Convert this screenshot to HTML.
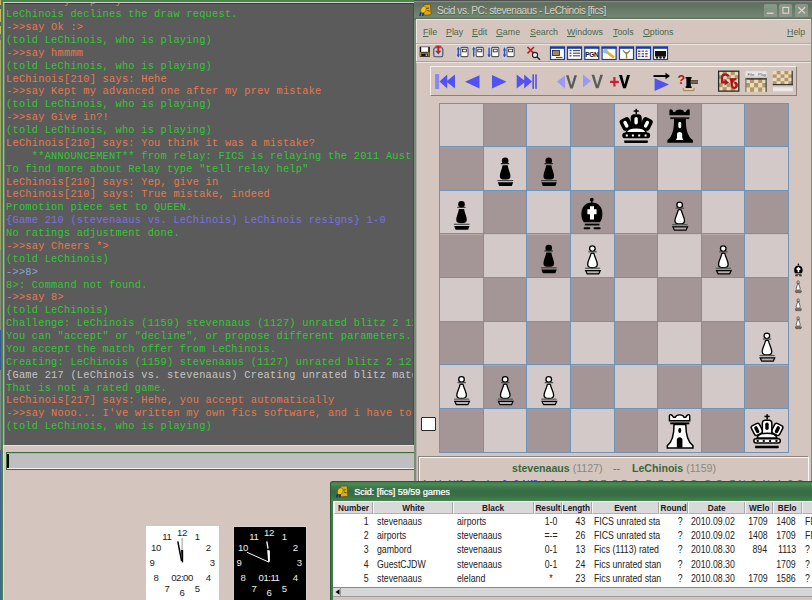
<!DOCTYPE html>
<html><head><meta charset="utf-8"><style>
*{margin:0;padding:0;box-sizing:border-box}
html,body{width:812px;height:600px;overflow:hidden}
body{position:relative;background:#d4c6bf;font-family:"Liberation Sans",sans-serif}
.a{position:absolute}
svg{position:absolute;overflow:visible}
#chat pre{position:absolute;left:2px;top:-7.7px;font-family:"Liberation Mono",monospace;font-size:10.3px;letter-spacing:0.26px;line-height:12.87px;color:#33c633;white-space:pre}
.o{color:#e47a4c}.p{color:#7c70e4}.c{color:#86a6d6}.w{color:#c4c4c4}
.menu{position:absolute;top:25.9px;font-size:9.6px;color:#4a684a;white-space:nowrap;transform:scaleX(.92);transform-origin:0 0}
.menu u{text-decoration:underline;text-decoration-thickness:1px;text-underline-offset:1.2px}
.gl{position:absolute;font-size:10.2px;color:#222;white-space:nowrap;line-height:14px}
.gh{position:absolute;top:502px;height:12px;background:#d9d9d9;border-right:1px solid #a8a8a8;border-bottom:1px solid #b0b0b0;font-size:9.8px;font-weight:bold;color:#1a1a2a;text-align:center;line-height:11px;white-space:nowrap;overflow:hidden}
.gh span{display:inline-block;transform:scaleX(.84);margin:0 -10px}
.r{text-align:right}
</style></head><body>
<div class="a" style="left:0;top:0;width:1px;height:600px;background:linear-gradient(#c8b860 0,#c8b860 5px,#5a6a5a 5px,#5a6a5a 9px,#c8b860 9px,#c8b860 22px,#5a6a5a 22px,#5a6a5a 26px,#c8b860 26px,#c8b860 34px,#6a7a6a 34px,#6a7a6a 40px,#a8a868 40px,#a0a468 250px,#8a8a78 250px,#8a8a78 330px,#3a5a9a 330px,#3a5a9a 370px,#7a8a8a 370px,#7a8a8a 450px,#4a5a9a 450px,#3a6a8a 600px)"></div>
<div class="a" style="left:1px;top:0;width:413px;height:600px;background:#4a864a"></div>
<div class="a" style="left:1px;top:0;width:1px;height:600px;background:#5a7060"></div>
<div class="a" style="left:3px;top:2px;width:411px;height:598px;background:#d4c6bf"></div>
<div class="a" id="chat" style="left:3px;top:2px;width:411px;height:443px;background:#5b5b5b;border-top:1px solid #d0d0d0;border-left:1px solid #a4b8a4;overflow:hidden"><div class="a" style="left:0;top:0;width:420px;height:1px;background:#3c3c3c"></div><div class="a" style="left:0;top:0;width:1px;height:450px;background:#787878"></div><pre><span class="o">         y   p   y</span>
LeChinois declines the draw request.
<span class="o">->>say Ok :></span>
(told LeChinois, who is playing)
<span class="o">->>say hmmmm</span>
(told LeChinois, who is playing)
<span class="o">LeChinois[210] says: Hehe</span>
<span class="o">->>say Kept my advanced one after my prev mistake</span>
(told LeChinois, who is playing)
<span class="o">->>say Give in?!</span>
(told LeChinois, who is playing)
<span class="o">LeChinois[210] says: You think it was a mistake?</span>
    **ANNOUNCEMENT** from relay: FICS is relaying the 2011 Australian
To find more about Relay type "tell relay help"
<span class="o">LeChinois[210] says: Yep, give in</span>
<span class="o">LeChinois[210] says: True mistake, indeed</span>
Promotion piece set to QUEEN.
<span class="p">{Game 210 (stevenaaus vs. LeChinois) LeChinois resigns} 1-0</span>
No ratings adjustment done.
<span class="o">->>say Cheers *></span>
(told LeChinois)
<span class="c">->>8></span>
8>: Command not found.
<span class="o">->>say 8></span>
(told LeChinois)
Challenge: LeChinois (1159) stevenaaus (1127) unrated blitz 2 12
You can "accept" or "decline", or propose different parameters.
You accept the match offer from LeChinois.
Creating: LeChinois (1159) stevenaaus (1127) unrated blitz 2 12
<span class="w">{Game 217 (LeChinois vs. stevenaaus) Creating unrated blitz match.}</span>
That is not a rated game.
<span class="o">LeChinois[217] says: Hehe, you accept automatically</span>
<span class="o">->>say Nooo... I've written my own fics software, and i have to</span>
(told LeChinois, who is playing)</pre></div>
<div class="a" style="left:6px;top:452px;width:408px;height:18px;background:#bfbfbf;box-shadow:inset 0 1px 0 #b2b2b8;border-top:1px solid #3c6a3c;border-bottom:1px solid #3c6a3c;border-left:1px solid #3c6a3c"></div>
<div class="a" style="left:7px;top:468px;width:407px;height:1px;background:#f2f2f2"></div>
<div class="a" style="left:7px;top:454px;width:1.8px;height:13.5px;background:#000"></div>
<div class="a" style="left:3px;top:445px;width:1px;height:155px;background:#e4dcd8"></div>
<div class="a" style="left:3px;top:445px;width:411px;height:1px;background:#e8e0dc"></div>
<div class="a" style="left:414px;top:0;width:398px;height:486px;background:#788c78"></div>
<div class="a" style="left:414px;top:0;width:398px;height:20px;background:linear-gradient(#4f514f 0px,#4f514f 1px,#7a907a 1px,#7a907a 2px,#687a68 2px,#5f6e60 3px,#667866 9px,#6c7f6c 13px,#738873 17px,#627362 18px,#627362 19px,#627362 20px)"></div>
<div class="a" style="left:413px;top:3px;width:1px;height:442px;background:#4b4b4b"></div>
<div class="a" style="left:437px;top:4.5px;font-size:10.2px;color:#d8d0c8;letter-spacing:-0.47px;white-space:nowrap;text-shadow:0.5px 0.5px 0 #55654f">Scid vs. PC: stevenaaus - LeChinois [fics]</div>
<svg style="left:0;top:0" width="812" height="600" viewBox="0 0 812 600"><g transform="translate(419.3,3.9)"><path d="M4.5,0.6 L11.2,0.4 L11.8,9.8 L11,11 L5.5,11.4 L4.2,9.5 Z" fill="#d8ac18" stroke="#6a4a18" stroke-width="0.8"/><path d="M1.4,6.6 C1.6,3.2 4.2,1.6 6,2.6 C7.6,3.6 7.4,6.6 5.4,8.6 C4,9.8 1.4,9.6 1.4,6.6 Z" fill="#f0c800" stroke="#7a5a10" stroke-width="0.7"/><path d="M7.2,4.6 L9.8,4 M8,6.6 L10.4,7.2" stroke="#553820" stroke-width="0.9"/><path d="M1.6,8.6 L0.6,12 M4.2,8.8 L3.4,12" stroke="#1a2a88" stroke-width="1.5"/></g></svg>
<div class="a" style="left:763.5px;top:3.8px;width:13.2px;height:13px;background:#8b958b;border-radius:1.5px;overflow:hidden"><div class="a" style="left:0;top:4.5px;width:14px;height:4px;background:#7f977f"></div></div>
<div class="a" style="left:779.2px;top:3.8px;width:13.2px;height:13px;background:#8b958b;border-radius:1.5px;overflow:hidden"><div class="a" style="left:0;top:4.5px;width:14px;height:4px;background:#7f977f"></div></div>
<div class="a" style="left:795px;top:3.8px;width:13.2px;height:13px;background:#8b958b;border-radius:1.5px;overflow:hidden"><div class="a" style="left:0;top:4.5px;width:14px;height:4px;background:#7f977f"></div></div>
<svg style="left:0;top:0" width="812" height="600" viewBox="0 0 812 600"><rect x="767" y="12.6" width="6.5" height="1.3" fill="#e4d2d0"/><rect x="782.9" y="7.4" width="5.8" height="5.8" fill="none" stroke="#e4d2d0" stroke-width="1.1"/><path d="M798.4,7.2 L805,13.4 M805,7.2 L798.4,13.4" stroke="#e4d2d0" stroke-width="1.3"/></svg>
<div class="a" style="left:416px;top:19px;width:395px;height:467px;background:#d4c6bf;border-left:1px solid #b4aca6"></div>
<div class="a" style="left:416px;top:19px;width:395px;height:1px;background:#ece6e2"></div>
<div class="a" style="left:416px;top:19px;width:1px;height:24px;background:#f0ebe8"></div>
<div class="a" style="left:416px;top:44px;width:1px;height:17px;background:#f0ebe8"></div>
<div class="menu" style="left:423px"><u>F</u>ile</div>
<div class="menu" style="left:446px"><u>P</u>lay</div>
<div class="menu" style="left:472px"><u>E</u>dit</div>
<div class="menu" style="left:496px"><u>G</u>ame</div>
<div class="menu" style="left:530px"><u>S</u>earch</div>
<div class="menu" style="left:567px"><u>W</u>indows</div>
<div class="menu" style="left:613px"><u>T</u>ools</div>
<div class="menu" style="left:643px"><u>O</u>ptions</div>
<div class="menu" style="left:787px"><u>H</u>elp</div>
<div class="a" style="left:416px;top:43px;width:395px;height:1px;background:#b8aca6"></div>
<div class="a" style="left:416px;top:44px;width:395px;height:1px;background:#ece4df"></div>
<div class="a" style="left:416px;top:61px;width:395px;height:1px;background:#aaa09a"></div>
<div class="a" style="left:416px;top:62px;width:395px;height:1px;background:#ece4df"></div>
<div class="a" style="left:430px;top:66px;width:367px;height:30px;border-top:1px solid #f4eee8;border-left:1px solid #f4eee8;border-bottom:1px solid #8a8078;border-right:1px solid #8a8078"></div>
<svg style="left:0;top:0" width="812" height="600" viewBox="0 0 812 600"><rect x="435.1" y="74.1" width="4.1" height="14.9" fill="#8a8aee"/><path d="M439.5,81.6 L447.2,74.4 L447.2,88.6 Z M446.2,81.6 L455,74.4 L455,88.6 Z" fill="#5252f2"/><path d="M465,81.8 L479.5,75.2 L479.5,88.4 Z" fill="#5252f2"/><path d="M492,75 L506.6,81.8 L492,88.6 Z" fill="#5252f2"/><path d="M516.7,74.6 L525.6,81.6 L516.7,88.6 Z M524.2,74.6 L532,81.6 L524.2,88.6 Z" fill="#5252f2"/><rect x="532.4" y="74.4" width="1.6" height="14.4" fill="#5252f2"/><rect x="535.2" y="74.4" width="1.6" height="14.4" fill="#5252f2"/><path d="M557,81.6 L565,75.4 L565,88.7 Z" fill="#9a9af2"/><path d="M583,74.6 L591,81 L583,87.6 Z" fill="#9a9af2"/><path d="M566,75.2 L568.6,75.2 L571.4,85.2 L574.4,75.2 L577,75.2 L572.8,88.4 L570.2,88.4 Z" fill="#5c5c5c"/><path d="M591.5,74.8 L594.2,74.8 L597.2,85 L600.3,74.8 L603,74.8 L598.6,88.2 L595.9,88.2 Z" fill="#5c5c5c"/><rect x="610" y="80.8" width="8.8" height="2.2" fill="#cc1e2e"/><rect x="613.3" y="77" width="2.2" height="9.5" fill="#cc1e2e"/><path d="M619,74.9 L622,74.9 L624.5,84.4 L627,74.9 L630,74.9 L625.9,88.2 L623.1,88.2 Z" fill="#000"/><rect x="653.5" y="75.1" width="13" height="1.9" fill="#000"/><path d="M665.5,72.8 L670,76 L665.5,79.2 Z" fill="#000"/><path d="M654.6,78.2 L669,84.6 L654.6,91.1 Z" fill="#5252f2"/><text x="677.5" y="84.2" font-family="Liberation Sans" font-weight="bold" font-size="12.5" fill="#b41414">?</text><rect x="686.4" y="77.5" width="4.4" height="10.2" fill="#000"/><rect x="685.6" y="77" width="6" height="1.6" fill="#000"/><rect x="685.6" y="86.4" width="6" height="1.6" fill="#000"/><rect x="690.8" y="80.4" width="7.2" height="1.2" fill="#000"/><rect x="690.8" y="81.6" width="7.2" height="1" fill="#b09050"/><rect x="690.8" y="82.6" width="7.2" height="1" fill="#000"/><path d="M683,88.2 L684,90.6 L693.5,90.6 L694.3,88.2" fill="none" stroke="#b09060" stroke-width="1.4"/><rect x="718.6" y="71.2" width="20.2" height="19.9" fill="#e8dcbc"/><rect x="722.64" y="71.20" width="4.04" height="3.98" fill="#b4966a"/><rect x="730.72" y="71.20" width="4.04" height="3.98" fill="#b4966a"/><rect x="718.60" y="75.18" width="4.04" height="3.98" fill="#b4966a"/><rect x="726.68" y="75.18" width="4.04" height="3.98" fill="#b4966a"/><rect x="734.76" y="75.18" width="4.04" height="3.98" fill="#b4966a"/><rect x="722.64" y="79.16" width="4.04" height="3.98" fill="#b4966a"/><rect x="730.72" y="79.16" width="4.04" height="3.98" fill="#b4966a"/><rect x="718.60" y="83.14" width="4.04" height="3.98" fill="#b4966a"/><rect x="726.68" y="83.14" width="4.04" height="3.98" fill="#b4966a"/><rect x="734.76" y="83.14" width="4.04" height="3.98" fill="#b4966a"/><rect x="722.64" y="87.12" width="4.04" height="3.98" fill="#b4966a"/><rect x="730.72" y="87.12" width="4.04" height="3.98" fill="#b4966a"/><rect x="718.6" y="71.2" width="20.2" height="19.9" fill="none" stroke="#2a2a2a" stroke-width="1.3"/><path d="M728.3,76.4 C727.4,73.8 722.2,73.6 722,77.4 L722,82.3 L725.6,82.3" fill="none" stroke="#b0141c" stroke-width="2.3"/><path d="M724.6,79 L729,82.4 L724.6,85.6 Z" fill="#b0141c"/><path d="M729.6,79.2 L736.4,79.2" stroke="#b0141c" stroke-width="2.2"/><path d="M731.4,80 L732,85.6 C732.4,88.6 736.4,88.8 736.6,85.2 C736.6,83.6 735.4,82.6 734.2,82.6" fill="none" stroke="#b0141c" stroke-width="2.2"/><path d="M730,79.4 L734.6,80.2 L731.6,84.4 Z" fill="#b0141c"/><rect x="745.5" y="71.2" width="21.2" height="5.2" fill="#e8e6e4"/><text x="747.5" y="75.8" font-family="Liberation Sans" font-size="4.2" fill="#555">File</text><text x="758" y="75.8" font-family="Liberation Sans" font-size="4.2" fill="#555">Play</text><rect x="745.8" y="78.6" width="20.6" height="13.2" fill="#e8dcbc"/><rect x="749.92" y="78.60" width="4.12" height="4.40" fill="#b4966a"/><rect x="758.16" y="78.60" width="4.12" height="4.40" fill="#b4966a"/><rect x="745.80" y="83.00" width="4.12" height="4.40" fill="#b4966a"/><rect x="754.04" y="83.00" width="4.12" height="4.40" fill="#b4966a"/><rect x="762.28" y="83.00" width="4.12" height="4.40" fill="#b4966a"/><rect x="749.92" y="87.40" width="4.12" height="4.40" fill="#b4966a"/><rect x="758.16" y="87.40" width="4.12" height="4.40" fill="#b4966a"/><rect x="745.5" y="78.2" width="21.2" height="1.4" fill="#2a2a2a"/><rect x="745.3" y="78.2" width="1.2" height="13.7" fill="#777"/><rect x="765.5" y="78.2" width="1.2" height="13.7" fill="#444"/><rect x="772.8" y="71" width="19.4" height="13.6" fill="#e8dcbc"/><rect x="776.68" y="71.00" width="3.88" height="3.40" fill="#b4966a"/><rect x="784.44" y="71.00" width="3.88" height="3.40" fill="#b4966a"/><rect x="772.80" y="74.40" width="3.88" height="3.40" fill="#b4966a"/><rect x="780.56" y="74.40" width="3.88" height="3.40" fill="#b4966a"/><rect x="788.32" y="74.40" width="3.88" height="3.40" fill="#b4966a"/><rect x="776.68" y="77.80" width="3.88" height="3.40" fill="#b4966a"/><rect x="784.44" y="77.80" width="3.88" height="3.40" fill="#b4966a"/><rect x="772.80" y="81.20" width="3.88" height="3.40" fill="#b4966a"/><rect x="780.56" y="81.20" width="3.88" height="3.40" fill="#b4966a"/><rect x="788.32" y="81.20" width="3.88" height="3.40" fill="#b4966a"/><rect x="772.7" y="84" width="20.1" height="1.2" fill="#333"/><rect x="791.6" y="70.8" width="1.2" height="14.4" fill="#333"/><rect x="773" y="87.3" width="19.8" height="4" fill="#ebe9e7"/><rect x="419.7" y="46.7" width="10.1" height="10.1" fill="#111"/><rect x="421.2" y="47.2" width="7" height="4.6" fill="#fff"/><rect x="420.2" y="52.2" width="1" height="4" fill="#d0b020"/><rect x="428.3" y="52.2" width="1" height="4" fill="#d0b020"/><rect x="421.2" y="52.6" width="7" height="0.9" fill="#d0b020"/><rect x="425.6" y="54.3" width="1.6" height="1.6" fill="#ccc"/><rect x="433.8" y="47.8" width="9" height="9" rx="1.5" fill="#b8d4e8" stroke="#4a4a4a" stroke-width="1.1"/><rect x="437.4" y="45.8" width="1.8" height="6" fill="#d01818"/><path d="M435.2,50.8 L441.4,50.8 L438.3,54.4 Z" fill="#d01818"/><rect x="435.3" y="45.6" width="6" height="1.2" fill="#d01818"/><rect x="456" y="46" width="12.8" height="12.4" fill="#d2d2d6"/><rect x="460.8" y="47.4" width="7.2" height="9.2" rx="1" fill="#fff" stroke="#555" stroke-width="1.1"/><rect x="462.4" y="49.2" width="4" height="2.6" fill="none" stroke="#333" stroke-width="0.9"/><rect x="457.6" y="47.6" width="1.4" height="9" fill="#2a50c0"/><path d="M456.6,49.6 L458.3,47 L460,49.6 Z" fill="#2a50c0"/><path d="M456.6,54.6 L458.3,57.2 L460,54.6 Z" fill="#2a50c0"/><rect x="471.4" y="46" width="12.8" height="12.4" fill="#d2d2d6"/><rect x="476.2" y="47.4" width="7.2" height="9.2" rx="1" fill="#fff" stroke="#555" stroke-width="1.1"/><rect x="477.79999999999995" y="49.2" width="4" height="2.6" fill="none" stroke="#333" stroke-width="0.9"/><rect x="473.0" y="47.6" width="1.4" height="9" fill="#2a50c0"/><path d="M472.0,49.6 L473.7,47 L475.4,49.6 Z" fill="#2a50c0"/><rect x="486.8" y="46" width="12.8" height="12.4" fill="#d2d2d6"/><rect x="491.6" y="47.4" width="7.2" height="9.2" rx="1" fill="#fff" stroke="#555" stroke-width="1.1"/><rect x="493.2" y="49.2" width="4" height="2.6" fill="none" stroke="#333" stroke-width="0.9"/><rect x="488.40000000000003" y="47.6" width="1.4" height="9" fill="#2a50c0"/><path d="M487.40000000000003,54.6 L489.1,57.2 L490.8,54.6 Z" fill="#2a50c0"/><rect x="502.2" y="46" width="12.8" height="12.4" fill="#d2d2d6"/><rect x="507.0" y="47.4" width="7.2" height="9.2" rx="1" fill="#fff" stroke="#555" stroke-width="1.1"/><rect x="508.59999999999997" y="49.2" width="4" height="2.6" fill="none" stroke="#333" stroke-width="0.9"/><rect x="503.8" y="47.6" width="1.4" height="9" fill="#2a50c0"/><path d="M502.8,54.6 L504.5,57.2 L506.2,54.6 Z" fill="#2a50c0"/><path d="M502.8,50.6 L504.5,48 L506.2,50.6 Z" fill="#2a50c0"/><path d="M527.5,47 L534,53.4 M534,47 L527.5,53.4" stroke="#c81818" stroke-width="1.6"/><circle cx="535" cy="55" r="2.6" fill="#e0e8f0" stroke="#222" stroke-width="1.1"/><path d="M537,57 L540,59.8" stroke="#222" stroke-width="1.5"/><rect x="550.5" y="47.1" width="14" height="12.4" fill="#fff" stroke="#1a3c9c" stroke-width="1.2"/><rect x="550" y="46.6" width="15" height="2.2" fill="#1a3c9c"/><rect x="567.5" y="47.1" width="14" height="12.4" fill="#fff" stroke="#1a3c9c" stroke-width="1.2"/><rect x="567" y="46.6" width="15" height="2.2" fill="#1a3c9c"/><rect x="584.8" y="47.1" width="14" height="12.4" fill="#fff" stroke="#1a3c9c" stroke-width="1.2"/><rect x="584.3" y="46.6" width="15" height="2.2" fill="#1a3c9c"/><rect x="602.1" y="47.1" width="14" height="12.4" fill="#fff" stroke="#1a3c9c" stroke-width="1.2"/><rect x="601.6" y="46.6" width="15" height="2.2" fill="#1a3c9c"/><rect x="619.5" y="47.1" width="14" height="12.4" fill="#fff" stroke="#1a3c9c" stroke-width="1.2"/><rect x="619" y="46.6" width="15" height="2.2" fill="#1a3c9c"/><rect x="636.5" y="47.1" width="14" height="12.4" fill="#fff" stroke="#1a3c9c" stroke-width="1.2"/><rect x="636" y="46.6" width="15" height="2.2" fill="#1a3c9c"/><rect x="653.5" y="47.1" width="14" height="12.4" fill="#fff" stroke="#1a3c9c" stroke-width="1.2"/><rect x="653" y="46.6" width="15" height="2.2" fill="#1a3c9c"/><rect x="552.5" y="50.5" width="7" height="5" fill="#9a8a5a" stroke="#222" stroke-width="0.8"/><path d="M556,57.5 L562.5,57.5" stroke="#c81818" stroke-width="1.2"/><rect x="569.5" y="50.0" width="2" height="1.2" fill="#1a3c9c"/><rect x="573" y="50.0" width="7" height="1.2" fill="#555"/><rect x="569.5" y="52.6" width="2" height="1.2" fill="#1a3c9c"/><rect x="573" y="52.6" width="7" height="1.2" fill="#555"/><rect x="569.5" y="55.2" width="2" height="1.2" fill="#1a3c9c"/><rect x="573" y="55.2" width="7" height="1.2" fill="#555"/><text x="585.2" y="57.3" font-family="Liberation Sans" font-weight="bold" font-size="6.6" letter-spacing="-0.4" fill="#111">PGN</text><path d="M604,50 L614,57.5" stroke="#e0b020" stroke-width="2.6"/><circle cx="605.5" cy="51.2" r="2.4" fill="#a0b8d0"/><path d="M626.5,58.5 L626.5,52 M626.5,54 L623,50.5 M626.5,54 L630,50.5" stroke="#a08050" stroke-width="1.4"/><rect x="638.0" y="50.5" width="2.4" height="1.4" fill="#1a3c9c"/><rect x="641.6" y="50.5" width="2.4" height="1.4" fill="#c84040"/><rect x="645.2" y="50.5" width="2.4" height="1.4" fill="#666"/><rect x="638.0" y="53.1" width="2.4" height="1.4" fill="#c84040"/><rect x="641.6" y="53.1" width="2.4" height="1.4" fill="#666"/><rect x="645.2" y="53.1" width="2.4" height="1.4" fill="#1a3c9c"/><rect x="638.0" y="55.7" width="2.4" height="1.4" fill="#666"/><rect x="641.6" y="55.7" width="2.4" height="1.4" fill="#1a3c9c"/><rect x="645.2" y="55.7" width="2.4" height="1.4" fill="#c84040"/><rect x="655" y="51" width="11" height="5.6" fill="#111"/><circle cx="657" cy="57.5" r="1.2" fill="#111"/><circle cx="660.5" cy="57.5" r="1.2" fill="#111"/><circle cx="664" cy="57.5" r="1.2" fill="#111"/></svg>
<svg style="left:0;top:0" width="812" height="600" viewBox="0 0 812 600"><rect x="439.500" y="103.500" width="43.675" height="43.675" fill="#d3c9c8"/><rect x="483.125" y="103.500" width="43.675" height="43.675" fill="#a49696"/><rect x="526.750" y="103.500" width="43.675" height="43.675" fill="#d3c9c8"/><rect x="570.375" y="103.500" width="43.675" height="43.675" fill="#a49696"/><rect x="614.000" y="103.500" width="43.675" height="43.675" fill="#d3c9c8"/><rect x="657.625" y="103.500" width="43.675" height="43.675" fill="#a49696"/><rect x="701.250" y="103.500" width="43.675" height="43.675" fill="#d3c9c8"/><rect x="744.875" y="103.500" width="43.675" height="43.675" fill="#a49696"/><rect x="439.500" y="147.125" width="43.675" height="43.675" fill="#a49696"/><rect x="483.125" y="147.125" width="43.675" height="43.675" fill="#d3c9c8"/><rect x="526.750" y="147.125" width="43.675" height="43.675" fill="#a49696"/><rect x="570.375" y="147.125" width="43.675" height="43.675" fill="#d3c9c8"/><rect x="614.000" y="147.125" width="43.675" height="43.675" fill="#a49696"/><rect x="657.625" y="147.125" width="43.675" height="43.675" fill="#d3c9c8"/><rect x="701.250" y="147.125" width="43.675" height="43.675" fill="#a49696"/><rect x="744.875" y="147.125" width="43.675" height="43.675" fill="#d3c9c8"/><rect x="439.500" y="190.750" width="43.675" height="43.675" fill="#d3c9c8"/><rect x="483.125" y="190.750" width="43.675" height="43.675" fill="#a49696"/><rect x="526.750" y="190.750" width="43.675" height="43.675" fill="#d3c9c8"/><rect x="570.375" y="190.750" width="43.675" height="43.675" fill="#a49696"/><rect x="614.000" y="190.750" width="43.675" height="43.675" fill="#d3c9c8"/><rect x="657.625" y="190.750" width="43.675" height="43.675" fill="#a49696"/><rect x="701.250" y="190.750" width="43.675" height="43.675" fill="#d3c9c8"/><rect x="744.875" y="190.750" width="43.675" height="43.675" fill="#a49696"/><rect x="439.500" y="234.375" width="43.675" height="43.675" fill="#a49696"/><rect x="483.125" y="234.375" width="43.675" height="43.675" fill="#d3c9c8"/><rect x="526.750" y="234.375" width="43.675" height="43.675" fill="#a49696"/><rect x="570.375" y="234.375" width="43.675" height="43.675" fill="#d3c9c8"/><rect x="614.000" y="234.375" width="43.675" height="43.675" fill="#a49696"/><rect x="657.625" y="234.375" width="43.675" height="43.675" fill="#d3c9c8"/><rect x="701.250" y="234.375" width="43.675" height="43.675" fill="#a49696"/><rect x="744.875" y="234.375" width="43.675" height="43.675" fill="#d3c9c8"/><rect x="439.500" y="278.000" width="43.675" height="43.675" fill="#d3c9c8"/><rect x="483.125" y="278.000" width="43.675" height="43.675" fill="#a49696"/><rect x="526.750" y="278.000" width="43.675" height="43.675" fill="#d3c9c8"/><rect x="570.375" y="278.000" width="43.675" height="43.675" fill="#a49696"/><rect x="614.000" y="278.000" width="43.675" height="43.675" fill="#d3c9c8"/><rect x="657.625" y="278.000" width="43.675" height="43.675" fill="#a49696"/><rect x="701.250" y="278.000" width="43.675" height="43.675" fill="#d3c9c8"/><rect x="744.875" y="278.000" width="43.675" height="43.675" fill="#a49696"/><rect x="439.500" y="321.625" width="43.675" height="43.675" fill="#a49696"/><rect x="483.125" y="321.625" width="43.675" height="43.675" fill="#d3c9c8"/><rect x="526.750" y="321.625" width="43.675" height="43.675" fill="#a49696"/><rect x="570.375" y="321.625" width="43.675" height="43.675" fill="#d3c9c8"/><rect x="614.000" y="321.625" width="43.675" height="43.675" fill="#a49696"/><rect x="657.625" y="321.625" width="43.675" height="43.675" fill="#d3c9c8"/><rect x="701.250" y="321.625" width="43.675" height="43.675" fill="#a49696"/><rect x="744.875" y="321.625" width="43.675" height="43.675" fill="#d3c9c8"/><rect x="439.500" y="365.250" width="43.675" height="43.675" fill="#d3c9c8"/><rect x="483.125" y="365.250" width="43.675" height="43.675" fill="#a49696"/><rect x="526.750" y="365.250" width="43.675" height="43.675" fill="#d3c9c8"/><rect x="570.375" y="365.250" width="43.675" height="43.675" fill="#a49696"/><rect x="614.000" y="365.250" width="43.675" height="43.675" fill="#d3c9c8"/><rect x="657.625" y="365.250" width="43.675" height="43.675" fill="#a49696"/><rect x="701.250" y="365.250" width="43.675" height="43.675" fill="#d3c9c8"/><rect x="744.875" y="365.250" width="43.675" height="43.675" fill="#a49696"/><rect x="439.500" y="408.875" width="43.675" height="43.675" fill="#a49696"/><rect x="483.125" y="408.875" width="43.675" height="43.675" fill="#d3c9c8"/><rect x="526.750" y="408.875" width="43.675" height="43.675" fill="#a49696"/><rect x="570.375" y="408.875" width="43.675" height="43.675" fill="#d3c9c8"/><rect x="614.000" y="408.875" width="43.675" height="43.675" fill="#a49696"/><rect x="657.625" y="408.875" width="43.675" height="43.675" fill="#d3c9c8"/><rect x="701.250" y="408.875" width="43.675" height="43.675" fill="#a49696"/><rect x="744.875" y="408.875" width="43.675" height="43.675" fill="#d3c9c8"/><rect x="439" y="103" width="1" height="350" fill="#6d94bb" shape-rendering="crispEdges"/><rect x="439" y="103" width="350" height="1" fill="#6d94bb" shape-rendering="crispEdges"/><rect x="483" y="103" width="1" height="350" fill="#6d94bb" shape-rendering="crispEdges"/><rect x="439" y="146" width="350" height="1" fill="#6d94bb" shape-rendering="crispEdges"/><rect x="526" y="103" width="1" height="350" fill="#6d94bb" shape-rendering="crispEdges"/><rect x="439" y="190" width="350" height="1" fill="#6d94bb" shape-rendering="crispEdges"/><rect x="570" y="103" width="1" height="350" fill="#6d94bb" shape-rendering="crispEdges"/><rect x="439" y="233" width="350" height="1" fill="#6d94bb" shape-rendering="crispEdges"/><rect x="614" y="103" width="1" height="350" fill="#6d94bb" shape-rendering="crispEdges"/><rect x="439" y="277" width="350" height="1" fill="#6d94bb" shape-rendering="crispEdges"/><rect x="657" y="103" width="1" height="350" fill="#6d94bb" shape-rendering="crispEdges"/><rect x="439" y="321" width="350" height="1" fill="#6d94bb" shape-rendering="crispEdges"/><rect x="701" y="103" width="1" height="350" fill="#6d94bb" shape-rendering="crispEdges"/><rect x="439" y="364" width="350" height="1" fill="#6d94bb" shape-rendering="crispEdges"/><rect x="744" y="103" width="1" height="350" fill="#6d94bb" shape-rendering="crispEdges"/><rect x="439" y="408" width="350" height="1" fill="#6d94bb" shape-rendering="crispEdges"/><rect x="788" y="103" width="1" height="350" fill="#6d94bb" shape-rendering="crispEdges"/><rect x="439" y="452" width="350" height="1" fill="#6d94bb" shape-rendering="crispEdges"/><g transform="translate(614.000,103.500)"><g><rect x="21.5" y="5.3" width="1.5" height="5.4" fill="#000"/><rect x="19.6" y="6.8" width="5.2" height="1.5" fill="#000"/><rect x="7.6" y="15.1" width="9" height="10.8" rx="2.3" transform="rotate(-27 12.1 20.5)" fill="#000" stroke="#000" stroke-width="1.5"/><rect x="27.8" y="15.1" width="9" height="10.8" rx="2.3" transform="rotate(27 32.3 20.5)" fill="#000" stroke="#000" stroke-width="1.5"/><rect x="17.45" y="11.45" width="9.5" height="15" rx="2.8" fill="#000" stroke="#000" stroke-width="1.5"/><rect x="20.4" y="13.6" width="3.4" height="7.4" rx="1.7" fill="#fff"/><rect x="10.2" y="17.1" width="3.4" height="7.4" rx="1.7" transform="rotate(-27 11.9 20.8)" fill="#fff"/><rect x="30.8" y="17.1" width="3.4" height="7.4" rx="1.7" transform="rotate(27 32.5 20.8)" fill="#fff"/><path d="M12.2,29.2 C13.5,22.6 30.9,22.6 32.2,29.2 Z" fill="#fff" stroke="#000" stroke-width="1.5"/><rect x="9" y="29.8" width="26.4" height="4.2" rx="2.1" fill="#000" stroke="#000" stroke-width="1.5"/><rect x="11.8" y="31" width="2" height="2" fill="#fff"/><rect x="17.9" y="31" width="2" height="2" fill="#fff"/><rect x="24.2" y="31" width="2" height="2" fill="#fff"/><rect x="30.6" y="31" width="2" height="2" fill="#fff"/><rect x="10.1" y="36.5" width="23.8" height="1" fill="#777"/><rect x="10.1" y="37.2" width="23.8" height="2.2" rx="0.8" fill="#000"/></g></g><g transform="translate(657.625,103.500)"><g><path d="M11.8,11.8 L11.8,7 C11.8,5.2 14.6,5.2 15.8,8.4 L17.6,8.4 C18.6,5.2 25.6,5.2 26.4,8.4 L28.2,8.4 C29.4,5.2 32.1,5.2 32.1,7 L32.1,11.8 Z" fill="#000"/><rect x="12.6" y="13.7" width="19.1" height="1.9" fill="#1a1a1a"/><path d="M16.4,15.6 L28.2,15.6 C28.2,25 29.4,32.5 35.3,36.8 L35.3,39.2 L9.7,39.2 L9.7,36.8 C15.4,32.5 16.4,25 16.4,15.6 Z" fill="#000"/><rect x="20.7" y="18.5" width="2.9" height="6.2" rx="1.4" fill="#fff"/><path d="M18.3,36.5 C19.6,35 19.4,33 19.4,31 C19.4,27.8 24.6,27.8 24.6,31 C24.6,33 24.4,35 25.7,36.5 Z" fill="#fff"/></g></g><g transform="translate(483.125,147.125)"><g><circle cx="22" cy="13.6" r="3.3" fill="#000"/><rect x="17.6" y="15.9" width="8.6" height="1.2" rx="0.6" fill="#222"/><path d="M19.4,18.2 L24.6,18.2 C25,22 27.3,25.5 27.3,29 C27.3,31.6 25.5,32.4 22,32.4 C18.5,32.4 16.7,31.6 16.7,29 C16.7,25.5 19,22 19.4,18.2 Z" fill="#000"/><rect x="14.3" y="33" width="15.7" height="1" fill="#333"/><path d="M14.7,35.2 L30,35.2 L28.8,38.4 Q28.6,38.9 28,38.9 L16.7,38.9 Q16.1,38.9 15.9,38.4 Z" fill="#000"/></g></g><g transform="translate(526.750,147.125)"><g><circle cx="22" cy="13.6" r="3.3" fill="#000"/><rect x="17.6" y="15.9" width="8.6" height="1.2" rx="0.6" fill="#222"/><path d="M19.4,18.2 L24.6,18.2 C25,22 27.3,25.5 27.3,29 C27.3,31.6 25.5,32.4 22,32.4 C18.5,32.4 16.7,31.6 16.7,29 C16.7,25.5 19,22 19.4,18.2 Z" fill="#000"/><rect x="14.3" y="33" width="15.7" height="1" fill="#333"/><path d="M14.7,35.2 L30,35.2 L28.8,38.4 Q28.6,38.9 28,38.9 L16.7,38.9 Q16.1,38.9 15.9,38.4 Z" fill="#000"/></g></g><g transform="translate(439.500,190.750)"><g><circle cx="22" cy="13.6" r="3.3" fill="#000"/><rect x="17.6" y="15.9" width="8.6" height="1.2" rx="0.6" fill="#222"/><path d="M19.4,18.2 L24.6,18.2 C25,22 27.3,25.5 27.3,29 C27.3,31.6 25.5,32.4 22,32.4 C18.5,32.4 16.7,31.6 16.7,29 C16.7,25.5 19,22 19.4,18.2 Z" fill="#000"/><rect x="14.3" y="33" width="15.7" height="1" fill="#333"/><path d="M14.7,35.2 L30,35.2 L28.8,38.4 Q28.6,38.9 28,38.9 L16.7,38.9 Q16.1,38.9 15.9,38.4 Z" fill="#000"/></g></g><g transform="translate(570.375,190.750)"><g><circle cx="21.4" cy="8.9" r="1.9" fill="#000"/><rect x="20.8" y="9" width="1.3" height="3.5" fill="#000"/><path d="M13.4,31.6 C11,28.5 10.6,24 11.2,20.5 C12.2,15 16.2,11.8 21.5,11.8 C26.8,11.8 30.8,15 31.8,20.5 C32.4,24 32,28.5 29.6,31.6 Z" fill="#000"/><path d="M19.6,15.6 L23.6,15.6 L23.6,18.4 L26.2,18.4 L26.2,23.4 L23.6,23.4 L23.6,28.8 L19.6,28.8 L19.6,23.4 L17,23.4 L17,18.4 L19.6,18.4 Z" fill="#fff"/><rect x="14.4" y="32.9" width="14.7" height="1.8" fill="#000"/><rect x="13.3" y="36.5" width="6.6" height="2.1" rx="0.8" fill="#000"/><rect x="23.2" y="36.5" width="7" height="2.1" rx="0.8" fill="#000"/></g></g><g transform="translate(657.625,190.750)"><g><circle cx="22" cy="14.2" r="2.8" fill="#fff" stroke="#000" stroke-width="1.3"/><rect x="18" y="16.9" width="8.4" height="1.1" fill="#444"/><path d="M20.5,19.4 C20.8,18.6 23.4,18.6 23.7,19.4 C24.2,23 26.9,26.4 26.9,30 C26.9,32.6 25,33.2 22.1,33.2 C19.2,33.2 17.3,32.6 17.3,30 C17.3,26.4 20,23 20.5,19.4 Z" fill="#fff" stroke="#000" stroke-width="1.3"/><rect x="14.6" y="33.3" width="15.2" height="1.2" fill="#555"/><path d="M15.3,36.2 L29.9,36.2 L28.4,39.4 L16.8,39.4 Z" fill="#b8b0ae" stroke="#000" stroke-width="1.2"/></g></g><g transform="translate(526.750,234.375)"><g><circle cx="22" cy="13.6" r="3.3" fill="#000"/><rect x="17.6" y="15.9" width="8.6" height="1.2" rx="0.6" fill="#222"/><path d="M19.4,18.2 L24.6,18.2 C25,22 27.3,25.5 27.3,29 C27.3,31.6 25.5,32.4 22,32.4 C18.5,32.4 16.7,31.6 16.7,29 C16.7,25.5 19,22 19.4,18.2 Z" fill="#000"/><rect x="14.3" y="33" width="15.7" height="1" fill="#333"/><path d="M14.7,35.2 L30,35.2 L28.8,38.4 Q28.6,38.9 28,38.9 L16.7,38.9 Q16.1,38.9 15.9,38.4 Z" fill="#000"/></g></g><g transform="translate(570.375,234.375)"><g><circle cx="22" cy="14.2" r="2.8" fill="#fff" stroke="#000" stroke-width="1.3"/><rect x="18" y="16.9" width="8.4" height="1.1" fill="#444"/><path d="M20.5,19.4 C20.8,18.6 23.4,18.6 23.7,19.4 C24.2,23 26.9,26.4 26.9,30 C26.9,32.6 25,33.2 22.1,33.2 C19.2,33.2 17.3,32.6 17.3,30 C17.3,26.4 20,23 20.5,19.4 Z" fill="#fff" stroke="#000" stroke-width="1.3"/><rect x="14.6" y="33.3" width="15.2" height="1.2" fill="#555"/><path d="M15.3,36.2 L29.9,36.2 L28.4,39.4 L16.8,39.4 Z" fill="#b8b0ae" stroke="#000" stroke-width="1.2"/></g></g><g transform="translate(701.250,234.375)"><g><circle cx="22" cy="14.2" r="2.8" fill="#fff" stroke="#000" stroke-width="1.3"/><rect x="18" y="16.9" width="8.4" height="1.1" fill="#444"/><path d="M20.5,19.4 C20.8,18.6 23.4,18.6 23.7,19.4 C24.2,23 26.9,26.4 26.9,30 C26.9,32.6 25,33.2 22.1,33.2 C19.2,33.2 17.3,32.6 17.3,30 C17.3,26.4 20,23 20.5,19.4 Z" fill="#fff" stroke="#000" stroke-width="1.3"/><rect x="14.6" y="33.3" width="15.2" height="1.2" fill="#555"/><path d="M15.3,36.2 L29.9,36.2 L28.4,39.4 L16.8,39.4 Z" fill="#b8b0ae" stroke="#000" stroke-width="1.2"/></g></g><g transform="translate(744.875,321.625)"><g><circle cx="22" cy="14.2" r="2.8" fill="#fff" stroke="#000" stroke-width="1.3"/><rect x="18" y="16.9" width="8.4" height="1.1" fill="#444"/><path d="M20.5,19.4 C20.8,18.6 23.4,18.6 23.7,19.4 C24.2,23 26.9,26.4 26.9,30 C26.9,32.6 25,33.2 22.1,33.2 C19.2,33.2 17.3,32.6 17.3,30 C17.3,26.4 20,23 20.5,19.4 Z" fill="#fff" stroke="#000" stroke-width="1.3"/><rect x="14.6" y="33.3" width="15.2" height="1.2" fill="#555"/><path d="M15.3,36.2 L29.9,36.2 L28.4,39.4 L16.8,39.4 Z" fill="#b8b0ae" stroke="#000" stroke-width="1.2"/></g></g><g transform="translate(439.500,365.250)"><g><circle cx="22" cy="14.2" r="2.8" fill="#fff" stroke="#000" stroke-width="1.3"/><rect x="18" y="16.9" width="8.4" height="1.1" fill="#444"/><path d="M20.5,19.4 C20.8,18.6 23.4,18.6 23.7,19.4 C24.2,23 26.9,26.4 26.9,30 C26.9,32.6 25,33.2 22.1,33.2 C19.2,33.2 17.3,32.6 17.3,30 C17.3,26.4 20,23 20.5,19.4 Z" fill="#fff" stroke="#000" stroke-width="1.3"/><rect x="14.6" y="33.3" width="15.2" height="1.2" fill="#555"/><path d="M15.3,36.2 L29.9,36.2 L28.4,39.4 L16.8,39.4 Z" fill="#b8b0ae" stroke="#000" stroke-width="1.2"/></g></g><g transform="translate(483.125,365.250)"><g><circle cx="22" cy="14.2" r="2.8" fill="#fff" stroke="#000" stroke-width="1.3"/><rect x="18" y="16.9" width="8.4" height="1.1" fill="#444"/><path d="M20.5,19.4 C20.8,18.6 23.4,18.6 23.7,19.4 C24.2,23 26.9,26.4 26.9,30 C26.9,32.6 25,33.2 22.1,33.2 C19.2,33.2 17.3,32.6 17.3,30 C17.3,26.4 20,23 20.5,19.4 Z" fill="#fff" stroke="#000" stroke-width="1.3"/><rect x="14.6" y="33.3" width="15.2" height="1.2" fill="#555"/><path d="M15.3,36.2 L29.9,36.2 L28.4,39.4 L16.8,39.4 Z" fill="#b8b0ae" stroke="#000" stroke-width="1.2"/></g></g><g transform="translate(526.750,365.250)"><g><circle cx="22" cy="14.2" r="2.8" fill="#fff" stroke="#000" stroke-width="1.3"/><rect x="18" y="16.9" width="8.4" height="1.1" fill="#444"/><path d="M20.5,19.4 C20.8,18.6 23.4,18.6 23.7,19.4 C24.2,23 26.9,26.4 26.9,30 C26.9,32.6 25,33.2 22.1,33.2 C19.2,33.2 17.3,32.6 17.3,30 C17.3,26.4 20,23 20.5,19.4 Z" fill="#fff" stroke="#000" stroke-width="1.3"/><rect x="14.6" y="33.3" width="15.2" height="1.2" fill="#555"/><path d="M15.3,36.2 L29.9,36.2 L28.4,39.4 L16.8,39.4 Z" fill="#b8b0ae" stroke="#000" stroke-width="1.2"/></g></g><g transform="translate(657.625,408.875)"><g><path d="M11.8,11.8 L11.8,7 C11.8,5.2 14.6,5.2 15.8,8.4 L17.6,8.4 C18.6,5.2 25.6,5.2 26.4,8.4 L28.2,8.4 C29.4,5.2 32.1,5.2 32.1,7 L32.1,11.8 Z" fill="#fff" stroke="#000" stroke-width="1.4"/><rect x="12.6" y="13.5" width="19.1" height="1.9" fill="#000"/><path d="M16.4,15.6 L28.2,15.6 C28.2,25 29.4,32.5 35.3,36.8 L35.3,39.2 L9.7,39.2 L9.7,36.8 C15.4,32.5 16.4,25 16.4,15.6 Z" fill="#fff" stroke="#000" stroke-width="1.5"/><ellipse cx="22.1" cy="21.5" rx="1.5" ry="2.6" fill="#000"/><path d="M19.2,38.8 L19.2,31 C19.2,27.4 24.8,27.4 24.8,31 L24.8,38.8 Z" fill="#000"/></g></g><g transform="translate(744.875,408.875)"><g><rect x="21.5" y="5.3" width="1.5" height="5.4" fill="#000"/><rect x="19.6" y="6.8" width="5.2" height="1.5" fill="#000"/><rect x="7.6" y="15.1" width="9" height="10.8" rx="2.3" transform="rotate(-27 12.1 20.5)" fill="#fff" stroke="#000" stroke-width="1.5"/><rect x="27.8" y="15.1" width="9" height="10.8" rx="2.3" transform="rotate(27 32.3 20.5)" fill="#fff" stroke="#000" stroke-width="1.5"/><rect x="17.45" y="11.45" width="9.5" height="15" rx="2.8" fill="#fff" stroke="#000" stroke-width="1.5"/><rect x="20.4" y="13.6" width="3.4" height="7.4" rx="1.7" fill="#000"/><rect x="10.2" y="17.1" width="3.4" height="7.4" rx="1.7" transform="rotate(-27 11.9 20.8)" fill="#000"/><rect x="30.8" y="17.1" width="3.4" height="7.4" rx="1.7" transform="rotate(27 32.5 20.8)" fill="#000"/><path d="M12.2,29.2 C13.5,22.6 30.9,22.6 32.2,29.2 Z" fill="#fff" stroke="#000" stroke-width="1.5"/><rect x="9" y="29.8" width="26.4" height="4.2" rx="2.1" fill="#fff" stroke="#000" stroke-width="1.5"/><rect x="11.8" y="31" width="2" height="2" fill="#000"/><rect x="17.9" y="31" width="2" height="2" fill="#000"/><rect x="24.2" y="31" width="2" height="2" fill="#000"/><rect x="30.6" y="31" width="2" height="2" fill="#000"/><rect x="10.1" y="36.5" width="23.8" height="1" fill="#777"/><rect x="10.1" y="37.2" width="23.8" height="2.2" rx="0.8" fill="#000"/></g></g></svg>
<div class="a" style="left:421px;top:417px;width:15px;height:14px;background:#fff;border:1px solid #2a2a2a;border-radius:1px"></div>
<svg style="left:0;top:0" width="812" height="600" viewBox="0 0 812 600"><g transform="translate(789.8,260.7) scale(0.4)"><g><circle cx="21.4" cy="8.9" r="1.9" fill="#000"/><rect x="20.8" y="9" width="1.3" height="3.5" fill="#000"/><path d="M13.4,31.6 C11,28.5 10.6,24 11.2,20.5 C12.2,15 16.2,11.8 21.5,11.8 C26.8,11.8 30.8,15 31.8,20.5 C32.4,24 32,28.5 29.6,31.6 Z" fill="#000"/><path d="M19.6,15.6 L23.6,15.6 L23.6,18.4 L26.2,18.4 L26.2,23.4 L23.6,23.4 L23.6,28.8 L19.6,28.8 L19.6,23.4 L17,23.4 L17,18.4 L19.6,18.4 Z" fill="#fff"/><rect x="14.4" y="32.9" width="14.7" height="1.8" fill="#000"/><rect x="13.3" y="36.5" width="6.6" height="2.1" rx="0.8" fill="#000"/><rect x="23.2" y="36.5" width="7" height="2.1" rx="0.8" fill="#000"/></g></g><g transform="translate(788.9,276.1) scale(0.42)"><g><circle cx="22" cy="14.2" r="2.8" fill="#fff" stroke="#000" stroke-width="1.3"/><rect x="18" y="16.9" width="8.4" height="1.1" fill="#444"/><path d="M20.5,19.4 C20.8,18.6 23.4,18.6 23.7,19.4 C24.2,23 26.9,26.4 26.9,30 C26.9,32.6 25,33.2 22.1,33.2 C19.2,33.2 17.3,32.6 17.3,30 C17.3,26.4 20,23 20.5,19.4 Z" fill="#fff" stroke="#000" stroke-width="1.3"/><rect x="14.6" y="33.3" width="15.2" height="1.2" fill="#555"/><path d="M15.3,36.2 L29.9,36.2 L28.4,39.4 L16.8,39.4 Z" fill="#b8b0ae" stroke="#000" stroke-width="1.2"/></g></g><g transform="translate(788.9,294.1) scale(0.42)"><g><circle cx="22" cy="14.2" r="2.8" fill="#fff" stroke="#000" stroke-width="1.3"/><rect x="18" y="16.9" width="8.4" height="1.1" fill="#444"/><path d="M20.5,19.4 C20.8,18.6 23.4,18.6 23.7,19.4 C24.2,23 26.9,26.4 26.9,30 C26.9,32.6 25,33.2 22.1,33.2 C19.2,33.2 17.3,32.6 17.3,30 C17.3,26.4 20,23 20.5,19.4 Z" fill="#fff" stroke="#000" stroke-width="1.3"/><rect x="14.6" y="33.3" width="15.2" height="1.2" fill="#555"/><path d="M15.3,36.2 L29.9,36.2 L28.4,39.4 L16.8,39.4 Z" fill="#b8b0ae" stroke="#000" stroke-width="1.2"/></g></g><g transform="translate(788.9,312.1) scale(0.42)"><g><circle cx="22" cy="14.2" r="2.8" fill="#fff" stroke="#000" stroke-width="1.3"/><rect x="18" y="16.9" width="8.4" height="1.1" fill="#444"/><path d="M20.5,19.4 C20.8,18.6 23.4,18.6 23.7,19.4 C24.2,23 26.9,26.4 26.9,30 C26.9,32.6 25,33.2 22.1,33.2 C19.2,33.2 17.3,32.6 17.3,30 C17.3,26.4 20,23 20.5,19.4 Z" fill="#fff" stroke="#000" stroke-width="1.3"/><rect x="14.6" y="33.3" width="15.2" height="1.2" fill="#555"/><path d="M15.3,36.2 L29.9,36.2 L28.4,39.4 L16.8,39.4 Z" fill="#b8b0ae" stroke="#000" stroke-width="1.2"/></g></g></svg>
<div class="a" style="left:418px;top:456px;width:391px;height:30px;border-top:1px solid #8a827c;border-left:1px solid #8a827c;border-right:1.5px solid #fbf8f6"></div>
<div class="a" style="left:419px;top:457px;width:388.5px;height:29px;border-top:1.5px solid #fbf8f6;border-left:1px solid #fbf8f6"></div>
<div class="a" style="left:512px;top:462px;font-size:10.6px;white-space:nowrap;color:#3b663b"><b>stevenaaus</b> <span style="color:#8a8682">(1127)</span></div>
<div class="a" style="left:613px;top:462px;font-size:10.6px;white-space:nowrap;color:#6a6a6a">--</div>
<div class="a" style="left:632px;top:462px;font-size:10.6px;white-space:nowrap;color:#3b663b"><b>LeChinois</b> <span style="color:#8a8682">(1159)</span></div>
<div class="a" style="left:419px;top:478.6px;width:390px;height:2.4px;overflow:hidden;white-space:nowrap"><div class="a" style="left:3px;top:0;font-size:10px;color:#506650;letter-spacing:0.2px">1.d4 &nbsp;Nf6 &nbsp;2.c4 &nbsp;<span style="color:#3030c0">e6 &nbsp;3.Nf3</span> &nbsp;b6 &nbsp;4.g3 &nbsp;Bb7 &nbsp;5.Bg2 &nbsp;Be7 &nbsp;6.O-O &nbsp;O-O &nbsp;7.Nc3 &nbsp;Ne4 &nbsp;8.Qc2 &nbsp;Nxc3 &nbsp;<span style="color:#3030c0">9.</span></div></div>
<div class="a" style="left:146px;top:526px;width:73px;height:74px;background:#fff;"></div><svg style="left:0;top:0" width="812" height="600" viewBox="0 0 812 600"><text x="197.1" y="539.8" text-anchor="middle" font-family="Liberation Sans" font-size="9.6" letter-spacing="-0.4" fill="#222">1</text><text x="208.1" y="550.9" text-anchor="middle" font-family="Liberation Sans" font-size="9.6" letter-spacing="-0.4" fill="#222">2</text><text x="212.1" y="565.9" text-anchor="middle" font-family="Liberation Sans" font-size="9.6" letter-spacing="-0.4" fill="#222">3</text><text x="208.1" y="580.9" text-anchor="middle" font-family="Liberation Sans" font-size="9.6" letter-spacing="-0.4" fill="#222">4</text><text x="197.1" y="592.0" text-anchor="middle" font-family="Liberation Sans" font-size="9.6" letter-spacing="-0.4" fill="#222">5</text><text x="182.0" y="596.0" text-anchor="middle" font-family="Liberation Sans" font-size="9.6" letter-spacing="-0.4" fill="#222">6</text><text x="166.9" y="592.0" text-anchor="middle" font-family="Liberation Sans" font-size="9.6" letter-spacing="-0.4" fill="#222">7</text><text x="155.9" y="581.0" text-anchor="middle" font-family="Liberation Sans" font-size="9.6" letter-spacing="-0.4" fill="#222">8</text><text x="151.9" y="565.9" text-anchor="middle" font-family="Liberation Sans" font-size="9.6" letter-spacing="-0.4" fill="#222">9</text><text x="155.9" y="550.9" text-anchor="middle" font-family="Liberation Sans" font-size="9.6" letter-spacing="-0.4" fill="#222">10</text><text x="166.9" y="539.8" text-anchor="middle" font-family="Liberation Sans" font-size="9.6" letter-spacing="-0.4" fill="#222">11</text><text x="182.0" y="535.8" text-anchor="middle" font-family="Liberation Sans" font-size="9.6" letter-spacing="-0.4" fill="#222">12</text><text x="182" y="581.3000000000001" text-anchor="middle" font-family="Liberation Sans" font-size="9.6" letter-spacing="-0.5" fill="#222">02:00</text><path d="M182.1,538 L182.1,551" stroke="#999" stroke-width="1"/><path d="M177.8,541.4 L181.6,561" stroke="#000" stroke-width="1.5"/><path d="M181,550 L183.2,550 L183.2,562.2 L181.8,562.6 Z" fill="#000"/></svg>
<div class="a" style="left:234px;top:527px;width:72px;height:73px;background:#000;outline:1px solid #d8d0cc;"></div><svg style="left:0;top:0" width="812" height="600" viewBox="0 0 812 600"><text x="284.1" y="539.8" text-anchor="middle" font-family="Liberation Sans" font-size="9.6" letter-spacing="-0.4" fill="#eee">1</text><text x="295.1" y="550.9" text-anchor="middle" font-family="Liberation Sans" font-size="9.6" letter-spacing="-0.4" fill="#eee">2</text><text x="299.1" y="565.9" text-anchor="middle" font-family="Liberation Sans" font-size="9.6" letter-spacing="-0.4" fill="#eee">3</text><text x="295.1" y="580.9" text-anchor="middle" font-family="Liberation Sans" font-size="9.6" letter-spacing="-0.4" fill="#eee">4</text><text x="284.1" y="592.0" text-anchor="middle" font-family="Liberation Sans" font-size="9.6" letter-spacing="-0.4" fill="#eee">5</text><text x="269.0" y="596.0" text-anchor="middle" font-family="Liberation Sans" font-size="9.6" letter-spacing="-0.4" fill="#eee">6</text><text x="253.9" y="592.0" text-anchor="middle" font-family="Liberation Sans" font-size="9.6" letter-spacing="-0.4" fill="#eee">7</text><text x="242.9" y="581.0" text-anchor="middle" font-family="Liberation Sans" font-size="9.6" letter-spacing="-0.4" fill="#eee">8</text><text x="238.9" y="565.9" text-anchor="middle" font-family="Liberation Sans" font-size="9.6" letter-spacing="-0.4" fill="#eee">9</text><text x="242.9" y="550.9" text-anchor="middle" font-family="Liberation Sans" font-size="9.6" letter-spacing="-0.4" fill="#eee">10</text><text x="253.9" y="539.8" text-anchor="middle" font-family="Liberation Sans" font-size="9.6" letter-spacing="-0.4" fill="#eee">11</text><text x="269.0" y="535.8" text-anchor="middle" font-family="Liberation Sans" font-size="9.6" letter-spacing="-0.4" fill="#eee">12</text><text x="269" y="581.3000000000001" text-anchor="middle" font-family="Liberation Sans" font-size="9.6" letter-spacing="-0.5" fill="#eee">01:11</text><path d="M247,552.3 L268.6,562" stroke="#fff" stroke-width="1"/><path d="M266.8,541.3 L268,548.6" stroke="#fff" stroke-width="1.3"/><path d="M267.2,550 L269.9,550.6 L269.9,561.6 L268.2,562.4 Z" fill="#fff"/></svg>
<div class="a" style="left:330px;top:481px;width:482px;height:119px;background:linear-gradient(#3e7a4a 0px,#4b8b57 2px,#3f7a4b 5px,#376b43 9px,#3a7046 14px,#43804f 18px,#3f7b4b 20px,#3f7b4b 119px);border:1px solid #2c5a36;border-right:none;border-bottom:none;border-top-left-radius:3px"></div>
<svg style="left:0;top:0" width="812" height="600" viewBox="0 0 812 600"><g transform="translate(336,485.5)"><path d="M4.5,0.6 L11.2,0.4 L11.8,9.8 L11,11 L5.5,11.4 L4.2,9.5 Z" fill="#d8ac18" stroke="#6a4a18" stroke-width="0.8"/><path d="M1.4,6.6 C1.6,3.2 4.2,1.6 6,2.6 C7.6,3.6 7.4,6.6 5.4,8.6 C4,9.8 1.4,9.6 1.4,6.6 Z" fill="#f0c800" stroke="#7a5a10" stroke-width="0.7"/><path d="M7.2,4.6 L9.8,4 M8,6.6 L10.4,7.2" stroke="#553820" stroke-width="0.9"/><path d="M1.6,8.6 L0.6,12 M4.2,8.8 L3.4,12" stroke="#1a2a88" stroke-width="1.5"/></g></svg>
<div class="a" style="left:353.5px;top:486.2px;font-size:9.8px;color:#f0f2f0;white-space:nowrap;transform:scaleX(.92);transform-origin:0 0;text-shadow:0.45px 0 0 #f0f2f0">Scid: [fics] 59/59 games</div>
<div class="a" style="left:333px;top:501px;width:479px;height:99px;background:#d4c6bf"></div>
<div class="a" style="left:333px;top:501px;width:479px;height:86px;background:#fff"></div>
<div class="gh" style="left:334px;width:39.0px;border-left:1px solid #f4f4f4"><span>Number</span></div>
<div class="gh" style="left:373px;width:80.0px;border-left:1px solid #f4f4f4"><span>White</span></div>
<div class="gh" style="left:453px;width:80.5px;border-left:1px solid #f4f4f4"><span>Black</span></div>
<div class="gh" style="left:533.5px;width:28.5px;border-left:1px solid #f4f4f4"><span>Result</span></div>
<div class="gh" style="left:562px;width:29.5px;border-left:1px solid #f4f4f4"><span>Length</span></div>
<div class="gh" style="left:591.5px;width:67.5px;border-left:1px solid #f4f4f4"><span>Event</span></div>
<div class="gh" style="left:659px;width:28.5px;border-left:1px solid #f4f4f4"><span>Round</span></div>
<div class="gh" style="left:687.5px;width:57.5px;border-left:1px solid #f4f4f4"><span>Date</span></div>
<div class="gh" style="left:745px;width:28.0px;border-left:1px solid #f4f4f4"><span>WElo</span></div>
<div class="gh" style="left:773px;width:29.0px;border-left:1px solid #f4f4f4"><span>BElo</span></div>
<div class="gh" style="left:802px;width:48.0px;border-left:1px solid #f4f4f4"><span></span></div>
<div class="gl" style="right:443.5px;top:515.00px;transform:scaleX(0.86);transform-origin:100% 0">1</div>
<div class="gl" style="left:376.5px;top:515.00px;transform:scaleX(0.86);transform-origin:0 0">stevenaaus</div>
<div class="gl" style="left:456.5px;top:515.00px;transform:scaleX(0.86);transform-origin:0 0">airports</div>
<div class="gl" style="left:500.5px;width:100px;text-align:center;top:515.00px;transform:scaleX(0.86);transform-origin:50% 0">1-0</div>
<div class="gl" style="right:226.20000000000005px;top:515.00px;transform:scaleX(0.86);transform-origin:100% 0">43</div>
<div class="gl" style="left:594px;top:515.00px;transform:scaleX(0.86);transform-origin:0 0">FICS unrated sta</div>
<div class="gl" style="right:129.5px;top:515.00px;transform:scaleX(0.86);transform-origin:100% 0">?</div>
<div class="gl" style="left:690.5px;top:515.00px;transform:scaleX(0.86);transform-origin:0 0">2010.09.02</div>
<div class="gl" style="right:44.700000000000045px;top:515.00px;transform:scaleX(0.86);transform-origin:100% 0">1709</div>
<div class="gl" style="right:16.200000000000045px;top:515.00px;transform:scaleX(0.86);transform-origin:100% 0">1408</div>
<div class="gl" style="left:805px;top:515.00px;transform:scaleX(0.86);transform-origin:0 0">FI</div>
<div class="gl" style="right:443.5px;top:529.17px;transform:scaleX(0.86);transform-origin:100% 0">2</div>
<div class="gl" style="left:376.5px;top:529.17px;transform:scaleX(0.86);transform-origin:0 0">airports</div>
<div class="gl" style="left:456.5px;top:529.17px;transform:scaleX(0.86);transform-origin:0 0">stevenaaus</div>
<div class="gl" style="left:500.5px;width:100px;text-align:center;top:529.17px;transform:scaleX(0.86);transform-origin:50% 0">=-=</div>
<div class="gl" style="right:226.20000000000005px;top:529.17px;transform:scaleX(0.86);transform-origin:100% 0">26</div>
<div class="gl" style="left:594px;top:529.17px;transform:scaleX(0.86);transform-origin:0 0">FICS unrated sta</div>
<div class="gl" style="right:129.5px;top:529.17px;transform:scaleX(0.86);transform-origin:100% 0">?</div>
<div class="gl" style="left:690.5px;top:529.17px;transform:scaleX(0.86);transform-origin:0 0">2010.09.02</div>
<div class="gl" style="right:44.700000000000045px;top:529.17px;transform:scaleX(0.86);transform-origin:100% 0">1408</div>
<div class="gl" style="right:16.200000000000045px;top:529.17px;transform:scaleX(0.86);transform-origin:100% 0">1709</div>
<div class="gl" style="left:805px;top:529.17px;transform:scaleX(0.86);transform-origin:0 0">FI</div>
<div class="gl" style="right:443.5px;top:543.34px;transform:scaleX(0.86);transform-origin:100% 0">3</div>
<div class="gl" style="left:376.5px;top:543.34px;transform:scaleX(0.86);transform-origin:0 0">gambord</div>
<div class="gl" style="left:456.5px;top:543.34px;transform:scaleX(0.86);transform-origin:0 0">stevenaaus</div>
<div class="gl" style="left:500.5px;width:100px;text-align:center;top:543.34px;transform:scaleX(0.86);transform-origin:50% 0">0-1</div>
<div class="gl" style="right:226.20000000000005px;top:543.34px;transform:scaleX(0.86);transform-origin:100% 0">13</div>
<div class="gl" style="left:594px;top:543.34px;transform:scaleX(0.86);transform-origin:0 0">Fics (1113) rated</div>
<div class="gl" style="right:129.5px;top:543.34px;transform:scaleX(0.86);transform-origin:100% 0">?</div>
<div class="gl" style="left:690.5px;top:543.34px;transform:scaleX(0.86);transform-origin:0 0">2010.08.30</div>
<div class="gl" style="right:44.700000000000045px;top:543.34px;transform:scaleX(0.86);transform-origin:100% 0">894</div>
<div class="gl" style="right:16.200000000000045px;top:543.34px;transform:scaleX(0.86);transform-origin:100% 0">1113</div>
<div class="gl" style="left:805px;top:543.34px;transform:scaleX(0.86);transform-origin:0 0">?</div>
<div class="gl" style="right:443.5px;top:557.51px;transform:scaleX(0.86);transform-origin:100% 0">4</div>
<div class="gl" style="left:376.5px;top:557.51px;transform:scaleX(0.86);transform-origin:0 0">GuestCJDW</div>
<div class="gl" style="left:456.5px;top:557.51px;transform:scaleX(0.86);transform-origin:0 0">stevenaaus</div>
<div class="gl" style="left:500.5px;width:100px;text-align:center;top:557.51px;transform:scaleX(0.86);transform-origin:50% 0">0-1</div>
<div class="gl" style="right:226.20000000000005px;top:557.51px;transform:scaleX(0.86);transform-origin:100% 0">24</div>
<div class="gl" style="left:594px;top:557.51px;transform:scaleX(0.86);transform-origin:0 0">Fics unrated stan</div>
<div class="gl" style="right:129.5px;top:557.51px;transform:scaleX(0.86);transform-origin:100% 0">?</div>
<div class="gl" style="left:690.5px;top:557.51px;transform:scaleX(0.86);transform-origin:0 0">2010.08.30</div>
<div class="gl" style="right:44.700000000000045px;top:557.51px;transform:scaleX(0.86);transform-origin:100% 0"></div>
<div class="gl" style="right:16.200000000000045px;top:557.51px;transform:scaleX(0.86);transform-origin:100% 0">1709</div>
<div class="gl" style="left:805px;top:557.51px;transform:scaleX(0.86);transform-origin:0 0">?</div>
<div class="gl" style="right:443.5px;top:571.68px;transform:scaleX(0.86);transform-origin:100% 0">5</div>
<div class="gl" style="left:376.5px;top:571.68px;transform:scaleX(0.86);transform-origin:0 0">stevenaaus</div>
<div class="gl" style="left:456.5px;top:571.68px;transform:scaleX(0.86);transform-origin:0 0">eleland</div>
<div class="gl" style="left:500.5px;width:100px;text-align:center;top:571.68px;transform:scaleX(0.86);transform-origin:50% 0">*</div>
<div class="gl" style="right:226.20000000000005px;top:571.68px;transform:scaleX(0.86);transform-origin:100% 0">23</div>
<div class="gl" style="left:594px;top:571.68px;transform:scaleX(0.86);transform-origin:0 0">Fics unrated stan</div>
<div class="gl" style="right:129.5px;top:571.68px;transform:scaleX(0.86);transform-origin:100% 0">?</div>
<div class="gl" style="left:690.5px;top:571.68px;transform:scaleX(0.86);transform-origin:0 0">2010.08.30</div>
<div class="gl" style="right:44.700000000000045px;top:571.68px;transform:scaleX(0.86);transform-origin:100% 0">1709</div>
<div class="gl" style="right:16.200000000000045px;top:571.68px;transform:scaleX(0.86);transform-origin:100% 0">1586</div>
<div class="gl" style="left:805px;top:571.68px;transform:scaleX(0.86);transform-origin:0 0">?</div>
<div class="a" style="left:333px;top:587px;width:479px;height:1px;background:#8a8a8a"></div>
<div class="a" style="left:333px;top:588px;width:479px;height:9px;background:#d6d6d6;border-bottom:1px solid #9a9a9a"></div>
<div class="a" style="left:334px;top:588px;width:7px;height:8px;background:#dcdcdc;border-right:1px solid #a0a0a0"></div>
<svg style="left:0;top:0" width="812" height="600" viewBox="0 0 812 600"><path d="M335.5,592 L339.5,589.2 L339.5,594.8 Z" fill="#000"/></svg>
</body></html>
